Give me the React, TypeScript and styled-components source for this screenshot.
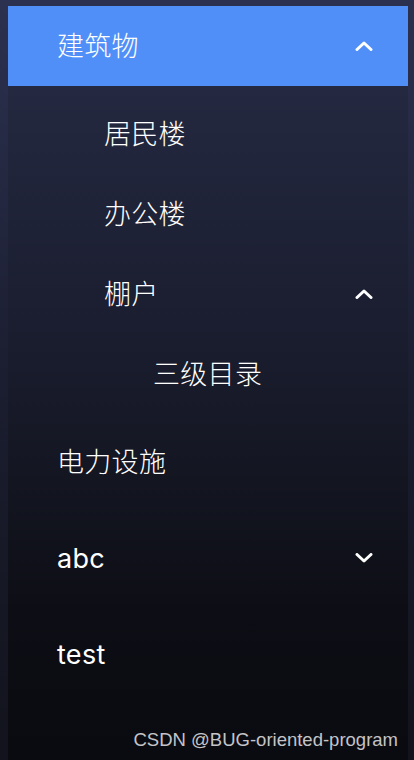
import { FC } from 'react';
import styled, { createGlobalStyle } from 'styled-components';

const GlobalStyle = createGlobalStyle`
  html, body {
    margin: 0;
    padding: 0;
    height: 100%;
  }
  body {
    background: linear-gradient(180deg, #2c3150 0%, #1b1e30 50%, #12131c 100%);
    font-family: Inter, "Noto Sans CJK SC", sans-serif;
    overflow: hidden;
  }
`;

const Chevron: FC<{ up?: boolean }> = ({ up }) => (
  <svg width="18" height="10" viewBox="0 0 18 10" fill="none">
    <path
      d={up ? 'M2 8.5 L9 2 L16 8.5' : 'M2 1.5 L9 8 L16 1.5'}
      stroke="#ffffff"
      strokeWidth="3"
      strokeLinecap="round"
      strokeLinejoin="round"
    />
  </svg>
);

const App: FC = () => {
  return (
    <>
      <GlobalStyle />
      <Page>
        <Menu>
          <Row level={1} height={80} active>
            <Title>建筑物</Title>
            <Chevron up />
          </Row>
          <SubList>
            <Row level={2} height={80}>
              <Title>居民楼</Title>
            </Row>
            <Row level={2} height={80}>
              <Title>办公楼</Title>
            </Row>
            <Row level={2} height={80}>
              <Title>棚户</Title>
              <Chevron up />
            </Row>
            <Row level={3} height={80}>
              <Title>三级目录</Title>
            </Row>
          </SubList>
          <Row level={1} height={96}>
            <Title>电力设施</Title>
          </Row>
          <Row level={1} height={96}>
            <Title latin>abc</Title>
            <Chevron />
          </Row>
          <Row level={1} height={96}>
            <Title latin>test</Title>
          </Row>
        </Menu>
        <Watermark>CSDN @BUG-oriented-program</Watermark>
      </Page>
    </>
  );
};

// Styles
const Page = styled.div`
  position: relative;
  height: 760px;
  padding: 6px 6px 0 8px;
  box-sizing: border-box;
`;

const Menu = styled.div`
  height: 100%;
  background: linear-gradient(180deg, #272c46 0%, #1a1d2e 45%, #0d0e15 80%, #0a0b10 100%);
  display: flex;
  flex-direction: column;
`;

const indent: Record<number, number> = { 1: 49, 2: 96, 3: 145 };

const Row = styled.div<{ level: number; height: number; active?: boolean }>`
  height: ${(p) => p.height}px;
  flex-shrink: 0;
  display: flex;
  align-items: center;
  justify-content: space-between;
  padding: 0 35px 0 ${(p) => indent[p.level]}px;
  background: ${(p) => (p.active ? '#4f8ff7' : 'transparent')};
  color: #ffffff;
`;

const SubList = styled.div`
  padding-top: 8px;
  display: flex;
  flex-direction: column;
`;

const Title = styled.span<{ latin?: boolean }>`
  font-size: 27px;
  line-height: 1;
  font-weight: ${(p) => (p.latin ? 400 : 300)};
  letter-spacing: 0.3px;
`;

const Watermark = styled.div`
  position: absolute;
  right: 16px;
  bottom: 9px;
  font-family: "Liberation Sans", Arial, sans-serif;
  font-size: 18.5px;
  color: #c4c4c8;
`;

export default App;
